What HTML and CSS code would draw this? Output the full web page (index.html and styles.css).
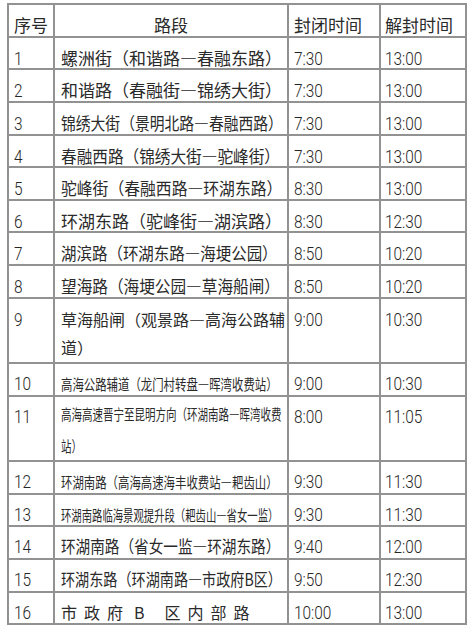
FILE: index.html
```html
<!DOCTYPE html>
<html lang="zh-CN">
<head>
<meta charset="utf-8">
<title>封闭路段时间表</title>
<link rel="stylesheet" href="styles.css">
</head>
<body>
<div class="sheet">
  <div class="row head">
    <div class="c">序号</div>
    <div class="c center">路段</div>
    <div class="c">封闭时间</div>
    <div class="c">解封时间</div>
  </div>
  <div class="row">
    <div class="c"><span class="n">1</span></div>
    <div class="c"><span class="fit">螺洲街（和谐路—春融东路）</span></div>
    <div class="c"><span class="n">7:30</span></div>
    <div class="c"><span class="n">13:00</span></div>
  </div>
  <div class="row">
    <div class="c"><span class="n">2</span></div>
    <div class="c"><span class="fit">和谐路（春融街—锦绣大街）</span></div>
    <div class="c"><span class="n">7:30</span></div>
    <div class="c"><span class="n">13:00</span></div>
  </div>
  <div class="row">
    <div class="c"><span class="n">3</span></div>
    <div class="c"><span class="fit sx87">锦绣大街（景明北路—春融西路）</span></div>
    <div class="c"><span class="n">7:30</span></div>
    <div class="c"><span class="n">13:00</span></div>
  </div>
  <div class="row">
    <div class="c"><span class="n">4</span></div>
    <div class="c"><span class="fit sx92">春融西路（锦绣大街—驼峰街）</span></div>
    <div class="c"><span class="n">7:30</span></div>
    <div class="c"><span class="n">13:00</span></div>
  </div>
  <div class="row">
    <div class="c"><span class="n">5</span></div>
    <div class="c"><span class="fit sx93">驼峰街（春融西路—环湖东路）</span></div>
    <div class="c"><span class="n">8:30</span></div>
    <div class="c"><span class="n">13:00</span></div>
  </div>
  <div class="row">
    <div class="c"><span class="n">6</span></div>
    <div class="c"><span class="fit">环湖东路（驼峰街—湖滨路）</span></div>
    <div class="c"><span class="n">8:30</span></div>
    <div class="c"><span class="n">12:30</span></div>
  </div>
  <div class="row">
    <div class="c"><span class="n">7</span></div>
    <div class="c"><span class="fit sx91">湖滨路（环湖东路—海埂公园）</span></div>
    <div class="c"><span class="n">8:50</span></div>
    <div class="c"><span class="n">10:20</span></div>
  </div>
  <div class="row">
    <div class="c"><span class="n">8</span></div>
    <div class="c"><span class="fit sx92">望海路（海埂公园—草海船闸）</span></div>
    <div class="c"><span class="n">8:50</span></div>
    <div class="c"><span class="n">10:20</span></div>
  </div>
  <div class="row">
    <div class="c"><span class="n">9</span></div>
    <div class="c"><span class="fit f16">草海船闸（观景路—高海公路辅<br>道）</span></div>
    <div class="c"><span class="n">9:00</span></div>
    <div class="c"><span class="n">10:30</span></div>
  </div>
  <div class="row lo">
    <div class="c"><span class="n">10</span></div>
    <div class="c"><span class="fit f15 sx76">高海公路辅道（龙门村转盘—晖湾收费站）</span></div>
    <div class="c"><span class="n">9:00</span></div>
    <div class="c"><span class="n">10:30</span></div>
  </div>
  <div class="row lo">
    <div class="c"><span class="n">11</span></div>
    <div class="c wide-lines"><span class="fit f15 sx70">高海高速晋宁至昆明方向（环湖南路—晖湾收费<br>站）</span></div>
    <div class="c"><span class="n">8:00</span></div>
    <div class="c"><span class="n">11:05</span></div>
  </div>
  <div class="row lo">
    <div class="c"><span class="n">12</span></div>
    <div class="c"><span class="fit f15 sx76">环湖南路（高海高速海丰收费站—耙齿山）</span></div>
    <div class="c"><span class="n">9:30</span></div>
    <div class="c"><span class="n">11:30</span></div>
  </div>
  <div class="row lo">
    <div class="c"><span class="n">13</span></div>
    <div class="c"><span class="fit f15 sx69">环湖南路临海景观提升段（耙齿山—省女一监）</span></div>
    <div class="c"><span class="n">9:30</span></div>
    <div class="c"><span class="n">11:30</span></div>
  </div>
  <div class="row lo">
    <div class="c"><span class="n">14</span></div>
    <div class="c"><span class="fit sx86">环湖南路（省女一监—环湖东路）</span></div>
    <div class="c"><span class="n">9:40</span></div>
    <div class="c"><span class="n">12:00</span></div>
  </div>
  <div class="row lo">
    <div class="c"><span class="n">15</span></div>
    <div class="c"><span class="fit sx83">环湖东路（环湖南路—市政府B区）</span></div>
    <div class="c"><span class="n">9:50</span></div>
    <div class="c"><span class="n">12:30</span></div>
  </div>
  <div class="row lo">
    <div class="c"><span class="n">16</span></div>
    <div class="c"><span class="fit f16 spaced">市政府<span class="b">B</span>区内部路</span></div>
    <div class="c"><span class="n">10:00</span></div>
    <div class="c"><span class="n">13:00</span></div>
  </div>
</div>
</body>
</html>
```
FILE: styles.css
```css
html, body {
  margin: 0;
  padding: 0;
  background: #ffffff;
}

body {
  font-family: "Noto Sans CJK SC", "Noto Sans", sans-serif;
  color: #2a2a2a;
}

.sheet {
  display: grid;
  grid-template-columns: 44px 232px 90px 84px;
  grid-template-rows: repeat(9, 30.65px) 63.3px 30.65px 63.3px repeat(5, 30.65px);
  gap: 2px;
  padding: 2px;
  width: max-content;
  margin: 3px 0 0 7px;
  background: #929292;
}

.row {
  display: contents;
}

.c {
  background: #ffffff;
  padding: 6px 0 0 5px;
  font-size: 17px;
  line-height: 28px;
  white-space: nowrap;
  min-width: 0;
}

.row > .c:nth-child(2) {
  padding-left: 6px;
}

.row > .c:nth-child(4) {
  padding-left: 4px;
}

.head > .c.center {
  padding-left: 0;
  text-align: center;
}

.lo > .c {
  padding-top: 5px;
}

.lo > .c.wide-lines {
  padding-top: 1px;
  line-height: 32px;
}

.n {
  display: inline-block;
  font-family: Roboto, "Liberation Sans", sans-serif;
  font-weight: 300;
  font-size: 17.5px;
  color: #262626;
  transform: scaleX(0.88);
  transform-origin: 0 50%;
}

.fit {
  display: inline-block;
  transform-origin: 0 50%;
}

.f16 { font-size: 16px; }
.f15 { font-size: 15px; }

.sx93 { transform: scaleX(0.93); }
.sx92 { transform: scaleX(0.92); }
.sx91 { transform: scaleX(0.91); }
.sx87 { transform: scaleX(0.87); }
.sx86 { transform: scaleX(0.86); }
.sx83 { transform: scaleX(0.83); }
.sx76 { transform: scaleX(0.76); }
.sx70 { transform: scaleX(0.70); }
.sx69 { transform: scaleX(0.69); }

.spaced {
  letter-spacing: 7px;
}

.spaced .b {
  margin: 0 13px 0 4px;
}
```
